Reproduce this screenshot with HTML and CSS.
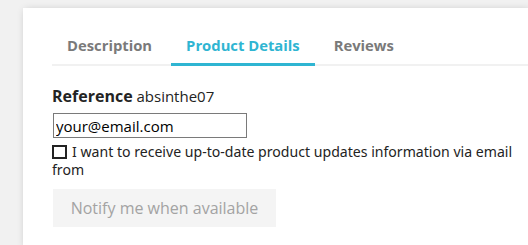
FILE: index.html
```html
<!DOCTYPE html>
<html>
<head>
<meta charset="utf-8">
<link rel="stylesheet" href="styles.css">
</head>
<body>
<div class="card">
  <ul class="tabs">
    <li class="tab">Description</li>
    <li class="tab active">Product Details</li>
    <li class="tab">Reviews</li>
  </ul>
  <div class="details">
    <div class="reference"><span class="label">Reference</span> absinthe07</div>
    <div class="field"><input class="email" type="text" value="your@email.com"></div>
    <label class="consent"><span class="box"></span>I want to receive up-to-date product updates information via email from</label>
    <button class="notify" type="button">Notify me when available</button>
  </div>
</div>
</body>
</html>
```
FILE: styles.css
```css
html, body {
  margin: 0;
  padding: 0;
  background: #f1f1f1;
  font-family: "Open Sans", "Noto Sans", sans-serif;
  color: #232323;
}
body {
  padding: 8px 0 0 23px;
  height: 245px;
  box-sizing: border-box;
  overflow: hidden;
}
.card {
  background: #fff;
  box-shadow: 2px 2px 8px 0 rgba(0,0,0,0.2);
  padding: 25px 0 0 29px;
  height: 237px;
  box-sizing: border-box;
}
.tabs {
  list-style: none;
  margin: 0;
  padding: 0;
  display: flex;
  gap: 4px;
  border-bottom: 2px solid #f1f1f1;
}
.tab {
  font-size: 14.8px;
  font-weight: 700;
  color: #7a7a7a;
  padding: 2px 15px 8px;
  line-height: 20px;
  margin-bottom: -2px;
  border-bottom: 3px solid transparent;
}
.tab.active {
  color: #2fb5d2;
  border-bottom-color: #2fb5d2;
}
.details {
  padding-top: 19px;
}
.reference {
  font-size: 15px;
  line-height: 22px;
  color: #232323;
}
.label {
  font-weight: 700;
  font-size: 16px;
}
.field {
  margin-top: 6px;
}
.email {
  width: 194px;
  height: 25px;
  box-sizing: border-box;
  border: 1px solid #7a7a7a;
  padding: 0 2px;
  font-family: "Open Sans", sans-serif;
  font-size: 15px;
  color: #000;
  margin: 0 0 0 1px;
  outline: none;
}
.consent {
  display: block;
  font-family: "Noto Sans", sans-serif;
  font-size: 14.1px;
  line-height: 18px;
  margin-top: 5px;
  padding-right: 10px;
  color: #232323;
}
.box {
  display: inline-block;
  width: 15px;
  height: 14px;
  box-sizing: border-box;
  border: 2px solid #232323;
  margin: 0 5px 0 0;
  vertical-align: -2px;
}
.notify {
  display: block;
  margin: 10px 0 0 1px;
  width: 223px;
  height: 38px;
  border: none;
  background: #f4f4f4;
  color: #a3a3a3;
  font-family: "Open Sans", sans-serif;
  font-size: 16px;
  padding: 0;
}
```
